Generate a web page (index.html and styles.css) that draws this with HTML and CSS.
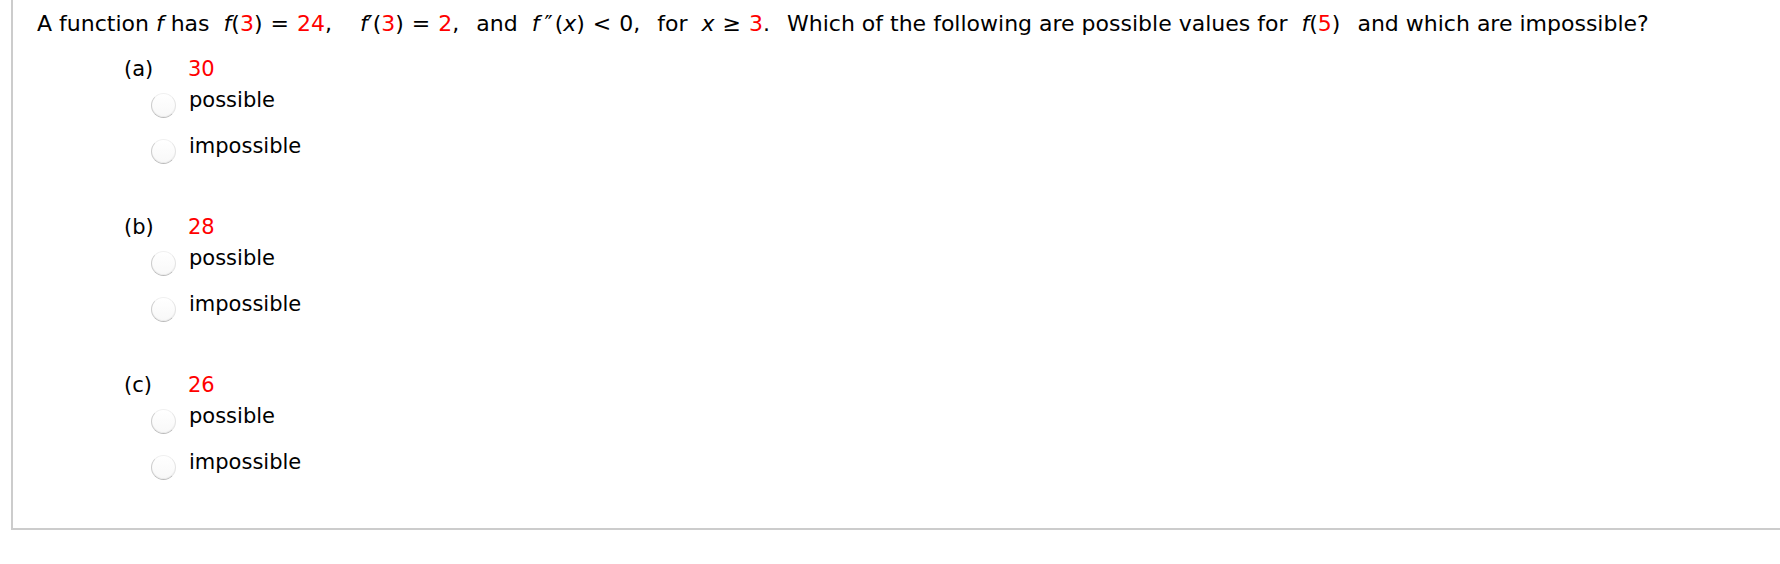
FILE: index.html
```html
<!DOCTYPE html>
<html lang="en">
<head>
    <meta charset="UTF-8">
    <title>Problem</title>
    <link rel="stylesheet" href="styles.css">
</head>
<body>

<div class="problem">
    <div class="question">
        <span>A function <i>f</i> has</span>
        <span class="math"><i>f</i>(<span class="val">3</span>)<span class="rel">=</span><span class="val">24</span>,</span>
        <span class="math wide"><i>f</i>&prime;(<span class="val">3</span>)<span class="rel">=</span><span class="val">2</span>,</span>
        <span class="more">and</span>
        <span class="math"><i>f</i><span class="dprime">&Prime;</span>(<i>x</i>)<span class="rel">&lt;</span>0,</span>
        <span class="more">for</span>
        <span class="math"><i>x</i><span class="rel">&ge;</span><span class="val">3</span>.</span>
        <span class="more">Which of the following are possible values for</span>
        <span class="math"><i>f</i>(<span class="val">5</span>)</span>
        <span class="more">and which are impossible?</span>
    </div>

    <div class="part">
        <div class="part-head">
            <span class="part-label">(a)</span>
            <span class="val">30</span>
        </div>
        <label class="option"><span class="radio"></span>possible</label>
        <label class="option"><span class="radio"></span>impossible</label>
    </div>

    <div class="part">
        <div class="part-head">
            <span class="part-label">(b)</span>
            <span class="val">28</span>
        </div>
        <label class="option"><span class="radio"></span>possible</label>
        <label class="option"><span class="radio"></span>impossible</label>
    </div>

    <div class="part">
        <div class="part-head">
            <span class="part-label">(c)</span>
            <span class="val">26</span>
        </div>
        <label class="option"><span class="radio"></span>possible</label>
        <label class="option"><span class="radio"></span>impossible</label>
    </div>
</div>

</body>
</html>
```

FILE: styles.css
```css
body {
    margin: 0;
    background: white;
    color: black;
    font-family: "DejaVu Sans", Verdana, sans-serif;
    font-size: 21px;
    line-height: 26px;
    overflow: hidden;
}

.problem {
    margin-left: 11px;
    border-left: 2px solid #cccccc;
    border-bottom: 2px solid #cccccc;
    padding: 11px 0 53px 24px;
}

.question {
    display: flex;
    gap: 14px;
    white-space: nowrap;
    font-size: 22px;
    margin-bottom: 19px;
}

.question .wide {
    margin-left: 14px;
}

.question .more {
    margin-left: 3px;
}

.rel {
    margin: 0 8px;
}

.dprime {
    margin: 0 2px 0 5px;
}

.val {
    color: #ff0000;
}

.part {
    margin-left: 87px;
    display: flex;
    flex-direction: column;
    margin-bottom: 55px;
}

.part:last-child {
    margin-bottom: 0;
}

.part-head {
    display: flex;
    margin-bottom: 5px;
}

.part-label {
    width: 64px;
}

.option {
    display: flex;
    align-items: center;
    padding-left: 27px;
    height: 26px;
    margin-bottom: 20px;
}

.option:last-child {
    margin-bottom: 0;
}

.radio {
    width: 25px;
    height: 25px;
    box-sizing: border-box;
    border-radius: 50%;
    border: 1px solid #d0d0d0;
    border-top-color: #f0f0f0;
    border-right-color: #e4e4e4;
    border-bottom-color: #bcbcbc;
    border-left-color: #cccccc;
    background: linear-gradient(#ffffff, #f8f8f8);
    box-shadow: inset 0 -1px 1px rgba(0, 0, 0, 0.06);
    margin: 10px 13px 0 0;
    flex-shrink: 0;
}
```
